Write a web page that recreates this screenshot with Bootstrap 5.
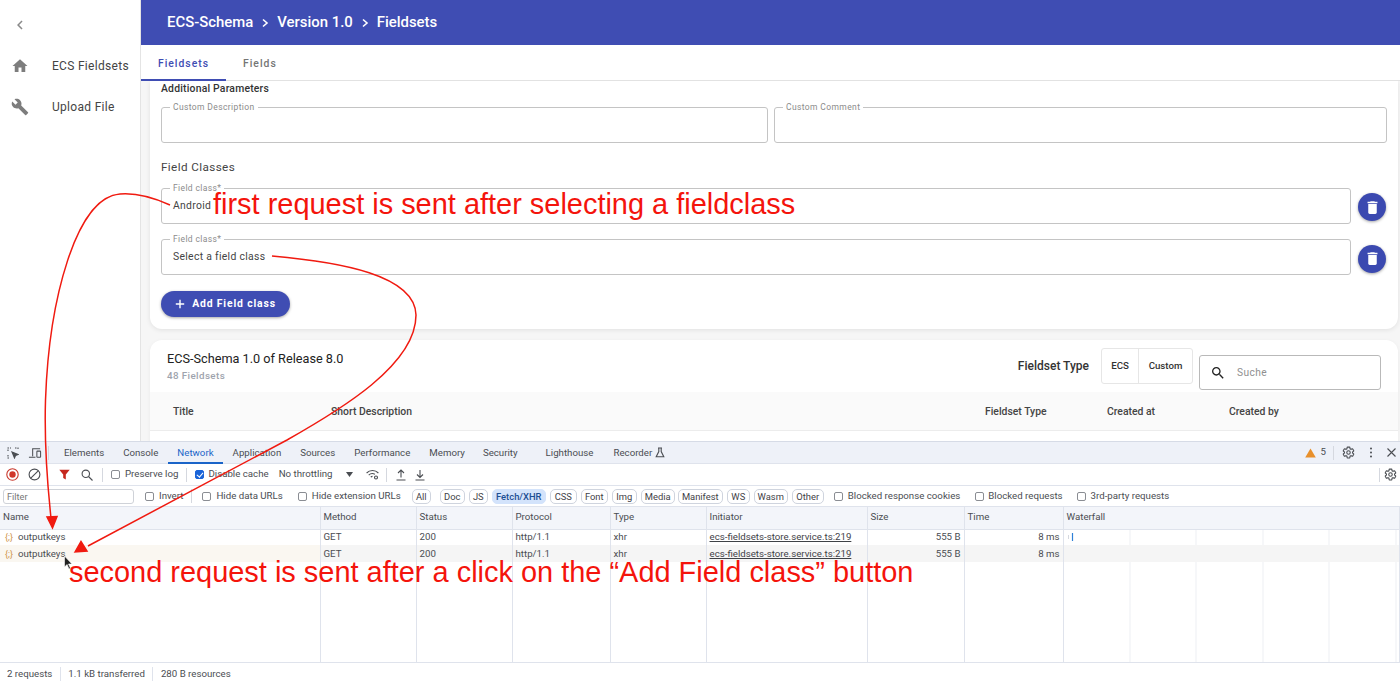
<!doctype html>
<html lang="en"><head><meta charset="utf-8"><title>ECS Fieldsets</title>
<link href="https://cdn.jsdelivr.net/npm/bootstrap@5.3.0/dist/css/bootstrap.min.css" rel="stylesheet">
<style>
html,body{height:681px;overflow:hidden;background:#fff}
body{font-family:Roboto,sans-serif;color:#212121;position:relative}
svg{display:block;flex:none}
.app-top{height:441px}
.side-col{width:141px;border-right:1px solid #e4e4e4}
.side-back{height:45px;padding:5px 0 0 11px;color:#8a8a8a}
.side-item{height:41px;font-size:12px;letter-spacing:.3px;color:#444;gap:23px;padding-left:11px}
.side-item svg{fill:#7d7d7d}
.app-head{height:45px;background:#3f4db3;color:#fff;font-size:14.9px;font-weight:500;padding-left:26px;gap:7px;flex-shrink:0}
.app-tabs{height:36px;border-bottom:1px solid #e2e2e2;font-size:10.4px;font-weight:500;letter-spacing:1px;color:#757575}
.app-tab{padding:1px 17px 0 17px;line-height:36px;height:36px}
.app-tab.on{color:#3f4db3;border-bottom:2px solid #3f4db3;width:85px;text-align:center;padding:1px 0 0}
.app-body{background:#f6f6f6;padding:0 2px 0 9px}
.pane{background:#fff;border-radius:0 0 12px 12px;box-shadow:0 1px 5px rgba(0,0,0,.09);padding:0 11px 12px;height:248px}
.pane-h6{font-size:10.4px;font-weight:500;letter-spacing:.2px;color:#333;line-height:14px;padding-top:1px}
.fld{border:1px solid #c4c4c4;border-radius:3px;height:41px;padding:0 11px;margin:0;min-width:0;font-size:10.4px;letter-spacing:.3px;color:#444}
.fld legend{float:none;width:auto;font-size:8.5px;letter-spacing:.38px;color:#8b8b8b;margin:0 0 0 -3px;padding:0 3px;line-height:10px}
.fld-val{line-height:20px;padding-top:3px}
.sect-h{font-size:11.7px;letter-spacing:.4px;color:#444;margin:17px 0 9px;line-height:14px}
.del-btn{width:28px;height:28px;background:#3b49b0;border:0;padding:0;box-shadow:0 1px 3px rgba(0,0,0,.35);margin-left:7px}
.add-btn{background:#3f4db3;color:#fff;border:0;width:129px;height:26px;font-size:10.4px;font-weight:700;letter-spacing:.85px;box-shadow:0 1px 3px rgba(0,0,0,.35);padding:0;gap:7px}
.pane2{background:#fff;border-radius:12px 12px 0 0;margin-top:11px;height:120px;box-shadow:0 1px 4px rgba(0,0,0,.05)}
.pane2-top{height:52px;padding:8px 17px 0 17px}
.pane2-title{font-size:12.7px;line-height:20px;color:#222;margin-top:1px}
.pane2-sub{font-size:9.8px;font-weight:500;letter-spacing:.4px;color:#9ea3ad;line-height:13px;margin-top:0}
.ftype{font-size:12px;font-weight:500;color:#333;margin:9px 12px 0 0;line-height:18px}
.tgl{border:1px solid #e6e6e6;border-radius:3px;height:36px;font-size:9.7px;font-weight:500;color:#333;line-height:34px}
.tgl span{display:block;text-align:center}
.srch{width:182px;height:35px;border:1px solid #b9b9b9;border-radius:3px;margin-left:6px;margin-top:7px;padding-left:10px;font-size:10.2px;letter-spacing:.4px;color:#8f8f8f;gap:11px}
.thd{height:39px;background:#fafafa;border-bottom:1px solid #ececec;font-size:10.4px;font-weight:500;color:#444;padding-top:1px}
.thd span{display:block}
.dev{height:240px;font-family:Roboto,sans-serif;font-size:9.7px;color:#4a4d52;background:#fff}
.dev-tabs{height:23px;background:#eef1f8;border-top:1px solid #d6dbe6;border-bottom:1px solid #dfe3ec}
.dev-tab{position:relative;line-height:21px;height:22px;white-space:nowrap}
.dev-tab.on{color:#1a64c8;border-bottom:2px solid #1a64c8}
.dev-ic{stroke:#4a4d52;fill:none;stroke-width:1.1}
.sep{width:1px;height:14px;background:#d5d8df}
.dev-bar{height:22px;border-bottom:1px solid #dfe3ec}
.cb{width:9px;height:9px;border:1px solid #8a8d93;border-radius:2px;background:#fff;flex:none;margin:0}
.cb.yes{background:#1a64d8;border-color:#1a64d8;position:relative}
.cb.yes::after{content:"";position:absolute;left:2px;top:0;width:3.5px;height:6px;border:solid #fff;border-width:0 1.4px 1.4px 0;transform:rotate(40deg)}
.dev-flt{height:21px;border-bottom:1px solid #dfe3ec}
.flt-box{width:131px;height:15px;border:1px solid #cfd2d8;border-radius:3px;margin-left:3px;padding-left:3px;line-height:13px;color:#777;font-size:9.2px}
.pill{border:1px solid #cfd4de;border-radius:5px;height:15px;line-height:13px;text-align:center;color:#3f4247;font-size:9.4px;flex:none}
.pill.on{background:#d3e3fb;border-color:#d3e3fb;color:#1d4f94;font-weight:500}
.net{width:1400px;height:155px;table-layout:fixed;margin:0;font-size:9.7px;color:#4a4d52;border-collapse:collapse}
.net th,.net td{border:0;border-right:1px solid #dfe3ec;padding:0 0 0 3px;font-weight:400;white-space:nowrap;overflow:hidden;background:transparent;box-shadow:none;color:#4a4d52;vertical-align:middle;line-height:12px}
.net thead th{height:22px;background:#f3f5fa;border-bottom:1px solid #dfe3ec;padding-bottom:2px}
.net tbody td{height:16px}
.net tbody .alt td{height:17px;background:#f5f5f5}
.net .alt td:first-child{background:#faf7f1}
.net tbody .fill td{height:100px}
.net td.wf{background-image:repeating-linear-gradient(90deg,transparent 0 65.6px,#eceef3 65.6px 66.6px);padding-left:3px}
.net td.r{text-align:right;padding-right:3px}
.net a{color:#3f4247}
.dot-ic{display:inline-block;color:#d0964c;font-size:9px;letter-spacing:0;width:13px;margin-left:2px}
.dev-foot{height:18px;border-top:1px solid #dfe3ec;font-size:9.7px;padding:5px 0 0 7px}
.dev-foot span{padding-right:7.5px;margin-right:7.5px;border-right:1px solid #dfe3ec;line-height:14px}
.dev-foot span:last-child{border:0}
.note-layer{position:absolute;left:0;top:0;width:1400px;height:681px;pointer-events:none}
.note{position:absolute;font-family:"Liberation Sans",Arial,sans-serif;color:#f4140c;white-space:nowrap;line-height:.8}
.note-a{left:213px;top:193px;font-size:28.95px}
.note-b{left:69px;top:561px;font-size:28.95px}
</style></head>
<body>
<div class="app-top d-flex overflow-hidden">
  <nav class="side-col flex-shrink-0">
    <div class="side-back d-flex align-items-center"><svg width="18" height="18" viewBox="0 0 24 24" fill="#8a8a8a"><path d="M15.41 7.41 14 6l-6 6 6 6 1.41-1.41L10.83 12z"/></svg></div>
    <div class="side-item d-flex align-items-center"><svg width="18" height="18" viewBox="0 0 24 24"><path d="M10 20v-6h4v6h5v-8h3L12 3 2 12h3v8z"/></svg><span>ECS Fieldsets</span></div>
    <div class="side-item d-flex align-items-center"><svg width="18" height="18" viewBox="0 0 24 24"><path d="M22.7 19l-9.1-9.1c.9-2.3.4-5-1.5-6.9-2-2-5-2.4-7.4-1.3L9 6 6 9 1.6 4.7C.4 7.1.9 10.1 2.9 12.1c1.9 1.9 4.6 2.4 6.9 1.5l9.1 9.1c.4.4 1 .4 1.4 0l2.3-2.3c.5-.4.5-1.1.1-1.4z"/></svg><span>Upload File</span></div>
  </nav>
  <main class="flex-grow-1 d-flex flex-column" style="min-width:0">
    <header class="app-head d-flex align-items-center"><span>ECS-Schema</span><svg width="10" height="10" viewBox="0 0 10 10" fill="none" stroke="#fff" stroke-width="1.6"><path d="M3 1.5 7 5 3 8.500"/></svg><span>Version 1.0</span><svg width="10" height="10" viewBox="0 0 10 10" fill="none" stroke="#fff" stroke-width="1.6"><path d="M3 1.5 7 5 3 8.500"/></svg><span>Fieldsets</span></header>
    <div class="app-tabs d-flex flex-shrink-0"><div class="app-tab on">Fieldsets</div><div class="app-tab">Fields</div></div>
    <div class="app-body flex-grow-1 overflow-hidden">
      <section class="pane">
        <div class="pane-h6">Additional Parameters</div>
        <div class="d-flex" style="gap:6px;margin-top:6px">
          <fieldset class="fld" style="width:607px"><legend>Custom Description</legend></fieldset>
          <fieldset class="fld" style="width:613px"><legend>Custom Comment</legend></fieldset>
        </div>
        <div class="sect-h">Field Classes</div>
        <div class="d-flex align-items-center" style="margin-bottom:10px">
          <fieldset class="fld" style="width:1190px"><legend>Field class*</legend><div class="fld-val">Android</div></fieldset>
          <button class="del-btn rounded-circle d-flex align-items-center justify-content-center" style="margin-top:7px"><svg width="17" height="17" viewBox="0 0 24 24" fill="#fff"><path d="M6 19c0 1.100.9 2 2 2h8c1.100 0 2-.9 2-2V7H6v12zM19 4h-3.500l-1-1h-5l-1 1H5v2h14V4z"/></svg></button>
        </div>
        <div class="d-flex align-items-center" style="margin-bottom:16px">
          <fieldset class="fld" style="width:1190px"><legend>Field class*</legend><div class="fld-val">Select a field class</div></fieldset>
          <button class="del-btn rounded-circle d-flex align-items-center justify-content-center" style="margin-top:8px"><svg width="17" height="17" viewBox="0 0 24 24" fill="#fff"><path d="M6 19c0 1.100.9 2 2 2h8c1.100 0 2-.9 2-2V7H6v12zM19 4h-3.500l-1-1h-5l-1 1H5v2h14V4z"/></svg></button>
        </div>
        <button class="add-btn rounded-pill d-flex align-items-center justify-content-center"><svg width="10" height="10" viewBox="0 0 10 10" stroke="#fff" stroke-width="1.400"><path d="M5 .8v8.400M.8 5h8.400"/></svg><span>Add Field class</span></button>
      </section>
      <section class="pane2">
        <div class="pane2-top d-flex">
          <div class="flex-grow-1"><div class="pane2-title">ECS-Schema 1.0 of Release 8.0</div><div class="pane2-sub">48 Fieldsets</div></div>
          <div class="ftype">Fieldset Type</div>
          <div class="tgl d-flex"><span style="width:37px;border-right:1px solid #e6e6e6">ECS</span><span style="width:53px">Custom</span></div>
          <div class="srch d-flex align-items-center"><svg width="16" height="16" viewBox="0 0 24 24" fill="#222"><path d="M15.500 14h-.79l-.28-.27C15.410 12.590 16 11.110 16 9.500 16 5.910 13.090 3 9.500 3S3 5.910 3 9.500 5.910 16 9.500 16c1.610 0 3.090-.59 4.230-1.570l.27.280v.79l5 4.990L20.490 19l-4.990-5zm-6 0C7.010 14 5 11.990 5 9.500S7.010 5 9.500 5 14 7.010 14 9.500 11.990 14 9.500 14z"/></svg><span>Suche</span></div>
        </div>
        <div class="thd d-flex align-items-center"><span style="width:181px;padding-left:23px">Title</span><span style="width:654px">Short Description</span><span style="width:122px">Fieldset Type</span><span style="width:122px">Created at</span><span>Created by</span></div>
      </section>
    </div>
  </main>
</div>
<div class="dev d-flex flex-column">
  <div class="dev-tabs d-flex align-items-center">
    <svg class="dev-ic" width="12" height="12" viewBox="0 0 12 12" style="margin-left:7px"><path d="M1 4V1h3M8 1h3v2M1 8v3h2" stroke-dasharray="1.500 1"/><path d="M5 5l6 2.500-2.500 1L7.500 11z" fill="#4a4d52"/></svg>
    <svg class="dev-ic" width="14" height="12" viewBox="0 0 15 12" style="margin-left:9px"><path d="M5 9.500V1.500h8M1 10.500h7"/><rect x="9.500" y="4" width="4" height="6.500" rx=".6"/></svg>
    <div class="sep" style="margin:0 7px 0 6px"></div>
    <div class="dev-tab" style="margin-left:8px">Elements</div>
    <div class="dev-tab" style="margin-left:19px">Console</div>
    <div class="dev-tab on" style="margin-left:10px;padding:0 9px">Network</div>
    <div class="dev-tab" style="margin-left:10px">Application</div>
    <div class="dev-tab" style="margin-left:19px">Sources</div>
    <div class="dev-tab" style="margin-left:19px">Performance</div>
    <div class="dev-tab" style="margin-left:19px">Memory</div>
    <div class="dev-tab" style="margin-left:18px">Security</div>
    <div class="dev-tab" style="margin-left:28px">Lighthouse</div>
    <div class="dev-tab" style="margin-left:20px">Recorder</div>
    <svg class="dev-ic" width="10" height="11" viewBox="0 0 10 11" style="margin-left:3px"><path d="M3 1h4M3.800 1v3.500L1.200 9.800h7.600L6.200 4.500V1"/></svg>
    <div class="flex-grow-1"></div>
    <svg width="11" height="10" viewBox="0 0 11 10"><path d="M5.500.5 10.800 9.500H.2z" fill="#e8902c"/></svg>
    <span style="margin-left:5px">5</span>
    <div class="sep" style="margin:0 8px 0 7px"></div>
    <svg class="dev-ic" width="13" height="13" viewBox="0 0 24 24" style="stroke-width:2"><path d="M19.430 12.980c.04-.32.07-.64.07-.98s-.03-.66-.07-.98l2.110-1.650c.19-.15.24-.42.12-.64l-2-3.460c-.12-.22-.39-.3-.61-.22l-2.490 1c-.52-.4-1.080-.73-1.690-.98l-.38-2.650C14.460 2.180 14.250 2 14 2h-4c-.25 0-.46.18-.49.42l-.38 2.650c-.61.25-1.170.59-1.690.98l-2.490-1c-.23-.09-.49 0-.61.22l-2 3.460c-.13.22-.07.49.12.64l2.110 1.650c-.04.32-.07.65-.07.98s.03.66.07.98l-2.110 1.650c-.19.15-.24.42-.12.64l2 3.460c.12.22.39.3.61.22l2.490-1c.52.4 1.080.73 1.690.98l.38 2.650c.03.24.24.42.49.42h4c.25 0 .46-.18.49-.42l.38-2.650c.61-.25 1.170-.59 1.690-.98l2.490 1c.23.09.49 0 .61-.22l2-3.460c.12-.22.07-.49-.12-.64l-2.110-1.650z"/><circle cx="12" cy="12" r="3.200"/></svg>
    <svg width="4" height="11" viewBox="0 0 4 11" fill="#4a4d52" style="margin-left:14px"><circle cx="2" cy="1.500" r="1"/><circle cx="2" cy="5.500" r="1"/><circle cx="2" cy="9.500" r="1"/></svg>
    <svg class="dev-ic" width="9" height="9" viewBox="0 0 9 9" style="margin:0 4px 0 14px"><path d="M.5.500l8 8M8.500.500l-8 8"/></svg>
  </div>
  <div class="dev-bar d-flex align-items-center">
    <svg width="13" height="13" viewBox="0 0 13 13" style="margin-left:6px"><circle cx="6.500" cy="6.500" r="5.700" fill="none" stroke="#c8382c" stroke-width="1.100"/><circle cx="6.500" cy="6.500" r="3.200" fill="#d0372b"/></svg>
    <svg class="dev-ic" width="13" height="13" viewBox="0 0 13 13" style="margin-left:9px"><circle cx="6.500" cy="6.500" r="5.400"/><path d="M2.800 10.200l7.400-7.400"/></svg>
    <svg width="11" height="11" viewBox="0 0 11 11" style="margin-left:18px"><path d="M.3.800h10.400L6.800 5.600v4.800L4.200 9V5.600z" fill="#c5281f"/></svg>
    <svg class="dev-ic" width="12" height="12" viewBox="0 0 12 12" style="margin-left:11px"><circle cx="4.800" cy="4.800" r="3.700"/><path d="M7.500 7.500l4 4"/></svg>
    <div class="sep" style="margin:0 8px 0 9px"></div>
    <span class="cb"></span><span style="margin-left:5px">Preserve log</span>
    <div class="sep" style="margin:0 8px 0 8px"></div>
    <span class="cb yes"></span><span style="margin-left:4px">Disable cache</span>
    <span style="margin-left:10px">No throttling</span>
    <svg width="7" height="5" viewBox="0 0 7 5" style="margin-left:13px"><path d="M0 0h7L3.500 5z" fill="#4a4d52"/></svg>
    <svg class="dev-ic" width="13" height="11" viewBox="0 0 13 11" style="margin-left:13px"><path d="M.6 4a8.200 8.200 0 0 1 11.800 0M2.700 6.200a5.200 5.200 0 0 1 6.200-.9M4.800 8.200a2.200 2.200 0 0 1 1.700-.8"/><circle cx="10" cy="8.500" r="1.500"/></svg>
    <div class="sep" style="margin:0 8px 0 7px"></div>
    <svg class="dev-ic" width="12" height="12" viewBox="0 0 12 12"><path d="M6 8.500V1.500M3 4l3-3 3 3M1.500 11h9"/></svg>
    <svg class="dev-ic" width="12" height="12" viewBox="0 0 12 12" style="margin-left:7px"><path d="M6 1v7M3 5.500l3 3 3-3M1.500 11h9"/></svg>
    <div class="flex-grow-1"></div>
    <div class="sep" style="margin-right:4px"></div>
    <svg class="dev-ic" width="13" height="13" viewBox="0 0 24 24" style="margin-right:3px;stroke-width:2"><path d="M19.430 12.980c.04-.32.07-.64.07-.98s-.03-.66-.07-.98l2.110-1.650c.19-.15.24-.42.12-.64l-2-3.460c-.12-.22-.39-.3-.61-.22l-2.490 1c-.52-.4-1.080-.73-1.690-.98l-.38-2.650C14.460 2.180 14.250 2 14 2h-4c-.25 0-.46.18-.49.42l-.38 2.650c-.61.25-1.170.59-1.690.98l-2.490-1c-.23-.09-.49 0-.61.22l-2 3.460c-.13.22-.07.49.12.64l2.110 1.650c-.04.32-.07.65-.07.98s.03.66.07.98l-2.110 1.650c-.19.15-.24.42-.12.64l2 3.460c.12.22.39.3.61.22l2.490-1c.52.4 1.080.73 1.690.98l.38 2.650c.03.24.24.42.49.42h4c.25 0 .46-.18.49-.42l.38-2.650c.61-.25 1.170-.59 1.690-.98l2.490 1c.23.09.49 0 .61-.22l2-3.460c.12-.22.07-.49-.12-.64l-2.110-1.650z"/><circle cx="12" cy="12" r="3.200"/></svg>
  </div>
  <div class="dev-flt d-flex align-items-center">
    <div class="flt-box">Filter</div>
    <span class="cb" style="margin-left:11px"></span><span style="margin-left:5px">Invert</span>
    <div class="sep" style="margin:0 10px 0 8px"></div>
    <span class="cb"></span><span style="margin-left:5px">Hide data URLs</span>
    <span class="cb" style="margin-left:15px"></span><span style="margin-left:5px">Hide extension URLs</span>
    <span class="pill" style="width:19px;margin-left:11px">All</span>
    <span class="pill" style="width:25px;margin-left:9px">Doc</span>
    <span class="pill" style="width:19px;margin-left:4px">JS</span>
    <span class="pill on" style="width:54px;margin-left:4px">Fetch/XHR</span>
    <span class="pill" style="width:27px;margin-left:4px">CSS</span>
    <span class="pill" style="width:27px;margin-left:4px">Font</span>
    <span class="pill" style="width:25px;margin-left:4px">Img</span>
    <span class="pill" style="width:34px;margin-left:4px">Media</span>
    <span class="pill" style="width:45px;margin-left:3px">Manifest</span>
    <span class="pill" style="width:23px;margin-left:4px">WS</span>
    <span class="pill" style="width:34px;margin-left:4px">Wasm</span>
    <span class="pill" style="width:32px;margin-left:4px">Other</span>
    <span class="cb" style="margin-left:10px"></span><span style="margin-left:5px">Blocked response cookies</span>
    <span class="cb" style="margin-left:15px"></span><span style="margin-left:4px">Blocked requests</span>
    <span class="cb" style="margin-left:14px"></span><span style="margin-left:5px">3rd-party requests</span>
  </div>
  <table class="net table">
    <colgroup><col style="width:320px"><col style="width:96px"><col style="width:96px"><col style="width:98px"><col style="width:96px"><col style="width:161px"><col style="width:97px"><col style="width:99px"><col></colgroup>
    <thead><tr><th>Name</th><th>Method</th><th>Status</th><th>Protocol</th><th>Type</th><th>Initiator</th><th>Size</th><th>Time</th><th>Waterfall</th></tr></thead>
    <tbody>
      <tr><td><span class="dot-ic">{;}</span>outputkeys</td><td>GET</td><td>200</td><td>http/1.1</td><td>xhr</td><td><a href="#">ecs-fieldsets-store.service.ts:219</a></td><td class="r">555 B</td><td class="r">8 ms</td><td class="wf"><svg width="8" height="10" viewBox="0 0 8 10"><path d="M1.500 3v4" stroke="#d5d8df"/><path d="M5.500 1v8" stroke="#2f80d8" stroke-width="1.200"/></svg></td></tr>
      <tr class="alt"><td><span class="dot-ic">{;}</span>outputkeys</td><td>GET</td><td>200</td><td>http/1.1</td><td>xhr</td><td><a href="#">ecs-fieldsets-store.service.ts:219</a></td><td class="r">555 B</td><td class="r">8 ms</td><td class="wf"></td></tr>
      <tr class="fill"><td></td><td></td><td></td><td></td><td></td><td></td><td></td><td></td><td class="wf"></td></tr>
    </tbody>
  </table>
  <div class="dev-foot d-flex align-items-center"><span>2 requests</span><span>1.1 kB transferred</span><span>280 B resources</span></div>
</div>
<div class="note-layer">
  <svg width="1400" height="681" viewBox="0 0 1400 681" fill="none" stroke="#f01a10" stroke-width="1.500">
    <path d="M170 205C150 196 132 193 120 194 76 197 49 300 45.500 400 44 450 48 490 51 518"/>
    <path d="M272 256C340 262 415 275 416 315 416 365 340 410 287 440L88 546"/>
    <path d="M52.500 528 47 517 57 516.500z" fill="#f01a10"/>
    <path d="M75 552 81 541.500 87 551z" fill="#f01a10"/>
    <path d="M64.500 556v11l2.500-2.500 2 4.500 1.500-.7-2-4.300h3.500z" fill="#222" stroke="#fff" stroke-width=".6"/>
  </svg>
  <div class="note note-a">first request is sent after selecting a fieldclass</div>
  <div class="note note-b">second request is sent after a click on the “Add Field class” button</div>
</div>
</body></html>
